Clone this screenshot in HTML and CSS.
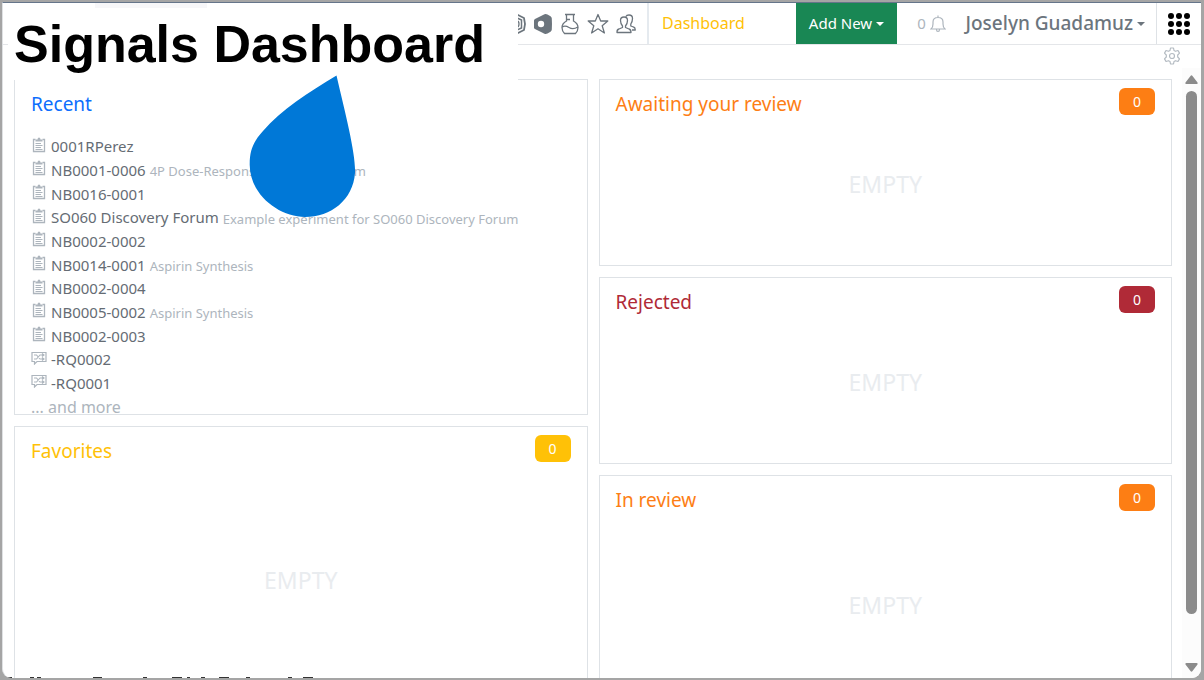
FILE: index.html
```html
<!DOCTYPE html>
<html lang="en">
<head>
<meta charset="utf-8">
<title>Signals Dashboard</title>
<link rel="stylesheet" href="styles.css">
</head>
<body>
<svg class="sprite" aria-hidden="true">
  <symbol id="note" viewBox="0 0 14 16">
    <path d="M3.500 2.500H1.500V14.500H12.500V2.500H10.500" fill="none" stroke="currentColor" stroke-width="1.300"/>
    <path d="M3.500 4.500V2.500H5.500L6 .800H8L8.500 2.500H10.500V4.500Z" fill="currentColor"/>
    <path d="M3.500 6.500H9M3.500 8.500H10.500M3.500 10.500H9M3.500 12.500H10.500" stroke="currentColor"/>
  </symbol>
  <symbol id="request" viewBox="0 0 16 14">
    <path d="M1 1.500H15V10.500H6L3.500 13V10.500H1Z" fill="none" stroke="currentColor" stroke-width="1.200"/>
    <path d="M3 4H5.500L9 8H12.500M3 8H5.500L9 4H12.500M11 2.500 13 4 11 5.500M11 6.500 13 8 11 9.500" fill="none" stroke="currentColor" stroke-width="1.100"/>
  </symbol>
</svg>
<div class="window">
  <header class="topbar">
    <span class="tab"></span>
    <nav class="tools" aria-label="Shortcuts">
      <button class="tool" aria-label="ChemDraw"><svg width="20" height="22" viewBox="0 0 20 22"><path d="M10 1 18 5 19 11 18 17 10 21 2 17V5Z" fill="none" stroke="currentColor" stroke-width="1.800"/><path d="M10 4.500 15.500 7V15L10 17.500 4.500 15V7Z" fill="none" stroke="currentColor" stroke-width="1.500"/><path d="M9.500 8V14H11Q13 14 13 11T11 8Z" fill="none" stroke="currentColor" stroke-width="1.300"/></svg></button>
      <button class="tool" aria-label="Spotfire"><svg width="20" height="22" viewBox="0 0 20 22"><path d="M1 7.500Q1 6.500 2 6L11.500 1.200Q13 .700 14.500 1.500L17.500 3.200Q18.700 4 18.800 5.500Q19.200 11 18.800 16.500Q18.700 18 17.500 18.800L14.500 20.500Q13 21.300 11.500 20.800L2 16Q1 15.500 1 14.500Z" fill="currentColor"/><circle cx="8" cy="11" r="3.200" fill="#fff"/></svg></button>
      <button class="tool" aria-label="Experiments"><svg width="20" height="22" viewBox="0 0 20 22" fill="none" stroke="currentColor" stroke-width="1.300"><path d="M5 1.500H15M6.500 1.500V8Q2 10.500 2 14.500Q2 18 4.500 20.500H15.500Q18 18 18 14.500Q18 10.500 13.500 8V1.500M2.300 14Q5 12 9 14.500T17.800 14M6.500 6.500H10"/></svg></button>
      <button class="tool" aria-label="Favorites"><svg width="22" height="22" viewBox="0 0 22 22" fill="none" stroke="currentColor" stroke-width="1.300" stroke-linejoin="round"><path d="M11 1.500 13.700 8H20.800L15.200 12.700 17.400 20 11 15.800 4.600 20 6.800 12.700 1.200 8H8.300Z"/></svg></button>
      <button class="tool" aria-label="Groups"><svg width="20" height="20" viewBox="0 0 20 20" fill="none" stroke="currentColor" stroke-width="1.300" stroke-linejoin="round"><path d="M1 18.500Q.800 15.500 3 15L6.500 13.500V12Q4.500 9.500 4.500 6.500Q4.500 3 8 3T11.500 6.500Q11.500 9.500 9.500 12V13.500L13 15Q15 15.500 15 18.500ZM10 2.500Q10.500 1 13 1Q16.500 1 16.500 4.500Q16.500 7.500 14.800 10V12L17.500 13Q19.300 13.500 19.300 16H16"/></svg></button>
    </nav>
    <div class="crumb"><a href="#dashboard">Dashboard</a></div>
    <button class="add">Add New<span class="caret"></span></button>
    <button class="alerts" aria-label="0 notifications">0 <svg width="16" height="18" viewBox="0 0 16 18" fill="none" stroke="currentColor" stroke-width="1.200"><path d="M1 14Q3 12.500 3 9V7Q3 2.500 8 2.500T13 7V9Q13 12.500 15 14ZM8 .500V2.500M6.500 14.500Q6.500 16.500 8 16.500T9.500 14.500"/></svg></button>
    <button class="user">Joselyn Guadamuz<span class="caret"></span></button>
    <button class="apps" aria-label="Applications"><svg width="22" height="22" viewBox="0 0 22 22"><circle cx="3" cy="3" r="3"/><circle cx="11" cy="3" r="3"/><circle cx="19" cy="3" r="3"/><circle cx="3" cy="11" r="3"/><circle cx="11" cy="11" r="3"/><circle cx="19" cy="11" r="3"/><circle cx="3" cy="19" r="3"/><circle cx="11" cy="19" r="3"/><circle cx="19" cy="19" r="3"/></svg></button>
  </header>
  <div class="settings">
    <button class="gear" aria-label="Settings"><svg width="16" height="18" viewBox="0 0 16 18" fill="none" stroke="currentColor" stroke-width="1.200" stroke-linejoin="round"><path d="M6.500 1H9.500L10 3.500 11.500 4.300 14 3.500 15.500 6.200 13.700 8V10L15.500 11.800 14 14.500 11.500 13.700 10 14.500 9.500 17H6.500L6 14.500 4.500 13.700 2 14.500 .500 11.800 2.300 10V8L.500 6.200 2 3.500 4.500 4.300 6 3.500Z"/><circle cx="8" cy="9" r="2.500"/></svg></button>
  </div>
  <div class="viewport">
    <main class="board">
      <div class="column">
        <section class="card recent">
          <div class="head"><h2 class="blue">Recent</h2></div>
          <ul class="list">
            <li><svg class="note"><use href="#note"/></svg><a href="#1">0001RPerez</a></li>
            <li><svg class="note"><use href="#note"/></svg><a href="#2">NB0001-0006</a><small>4P Dose-Response Curve Algorithm</small></li>
            <li><svg class="note"><use href="#note"/></svg><a href="#3">NB0016-0001</a></li>
            <li><svg class="note"><use href="#note"/></svg><a href="#4">SO060 Discovery Forum</a><small>Example experiment for SO060 Discovery Forum</small></li>
            <li><svg class="note"><use href="#note"/></svg><a href="#5">NB0002-0002</a></li>
            <li><svg class="note"><use href="#note"/></svg><a href="#6">NB0014-0001</a><small>Aspirin Synthesis</small></li>
            <li><svg class="note"><use href="#note"/></svg><a href="#7">NB0002-0004</a></li>
            <li><svg class="note"><use href="#note"/></svg><a href="#8">NB0005-0002</a><small>Aspirin Synthesis</small></li>
            <li><svg class="note"><use href="#note"/></svg><a href="#9">NB0002-0003</a></li>
            <li><svg class="request"><use href="#request"/></svg><a href="#10">-RQ0002</a></li>
            <li><svg class="request"><use href="#request"/></svg><a href="#11">-RQ0001</a></li>
            <li><a class="more" href="#more">... and more</a></li>
          </ul>
        </section>
        <section class="card favorites">
          <div class="head"><h2 class="yellow">Favorites</h2><span class="badge bg-yellow">0</span></div>
          <p class="empty">EMPTY</p>
        </section>
      </div>
      <div class="column">
        <section class="card short">
          <div class="head"><h2 class="orange">Awaiting your review</h2><span class="badge bg-orange">0</span></div>
          <p class="empty">EMPTY</p>
        </section>
        <section class="card short">
          <div class="head"><h2 class="red">Rejected</h2><span class="badge bg-red">0</span></div>
          <p class="empty">EMPTY</p>
        </section>
        <section class="card tall">
          <div class="head"><h2 class="orange">In review</h2><span class="badge bg-orange">0</span></div>
          <p class="empty">EMPTY</p>
        </section>
      </div>
    </main>
    <div class="scrollbar" aria-hidden="true">
      <svg width="13" height="9" viewBox="0 0 13 9"><path d="M5.500 1Q6.500-.500 7.500 1L12.500 7.500Q13 9 11.500 9H1.500Q0 9 .500 7.500Z" fill="#8b8b8b"/></svg>
      <span class="thumb"></span>
      <svg width="13" height="9" viewBox="0 0 13 9"><path d="M5.500 8Q6.500 9.500 7.500 8L12.500 1.500Q13 0 11.500 0H1.500Q0 0 .500 1.500Z" fill="#8b8b8b"/></svg>
    </div>
  </div>
  <h1 class="title">Signals Dashboard</h1>
  <svg class="drop" width="108" height="144" viewBox="0 0 108 144" aria-hidden="true"><path d="M87.500 .500C97 41 107 80 106 98C104 125 82 142 56 142C30 142 1 120 .700 90C.500 76 4 67 14 56C32 35 60 17 87.500 .500Z" fill="#0078d7"/></svg>
  <svg class="edge" width="320" height="1" viewBox="0 0 320 1" aria-hidden="true"><path d="M1 .500H9M27 .500h4m3 0h4m52 0h9m41 0h4m25 0h10m5 0h3m11 0h4m14 0h10m17 0h4m38 0h4m11 0h10" stroke="#333"/></svg>
</div>
</body>
</html>
```
FILE: styles.css
```css
* { box-sizing: border-box; }

body {
  margin: 0;
  background: #a5a5a5;
  color: #656c74;
  font: 15px/23px "Noto Sans", "Open Sans", sans-serif;
}

h1, h2, p, ul { margin: 0; padding: 0; font-weight: 400; }

button {
  margin: 0;
  padding: 0;
  border: 0;
  background: none;
  color: inherit;
  font: inherit;
  white-space: nowrap;
  cursor: pointer;
}

a { color: inherit; text-decoration: none; }
svg { display: block; flex: none; }
.sprite { position: absolute; width: 0; height: 0; }

.window {
  position: relative;
  display: flex;
  flex-direction: column;
  height: calc(100vh - 4px);
  margin: 2px 3px 2px 2px;
  overflow: hidden;
  border-top: 1px solid #65758a;
  border-left: 1px solid #dfe1e3;
  border-radius: 0 0 9px 9px;
  background: #fff;
}

.topbar {
  display: flex;
  flex: none;
  height: 42px;
  border-bottom: 1px solid #e4e6e9;
}

.tab { width: 112px; margin-left: 92px; background: #f7f7f9; }

.tools {
  display: flex;
  align-items: center;
  gap: 7px;
  margin-left: auto;
  padding-right: 11px;
  color: #6c757d;
}

.crumb {
  display: flex;
  align-items: center;
  width: 149px;
  padding-left: 13px;
  border-left: 2px solid #e5eaef;
  color: #ffc107;
  font-size: 16px;
}

.add, .user, .alerts { display: flex; align-items: center; justify-content: center; }
.add { width: 101px; background: #198754; color: #fff; }

.caret {
  margin-left: 4px;
  border: 4px solid transparent;
  border-top-color: currentColor;
  border-bottom: 0;
}

.alerts { width: 69px; gap: 4px; color: #adb5bd; }
.user { width: 190px; padding-right: 11px; justify-content: flex-end; color: #6c757d; font-size: 19px; font-weight: 500; }

.apps {
  display: grid;
  place-items: center;
  width: 45px;
  border-left: 1px solid #dee2e6;
}

.settings {
  display: flex;
  flex: none;
  align-items: flex-start;
  justify-content: flex-end;
  height: 23px;
  padding: 2px 21px 0 0;
  color: #b4bbc2;
}

.viewport { display: flex; flex: 1; min-height: 0; }

.board {
  display: grid;
  flex: 1;
  grid-template-columns: 1fr 1fr;
  gap: 11px;
  padding: 11px 10px 0 11px;
  overflow: hidden;
}

.column { display: flex; flex-direction: column; gap: 11px; }

.card {
  display: flex;
  flex: none;
  flex-direction: column;
  border: 1px solid #dee2e6;
}

.recent { height: 336px; }
.short { height: 187px; }
.tall { height: 237px; }
.favorites { height: 286px; }

.head {
  display: flex;
  flex: none;
  justify-content: space-between;
  height: 23px;
  padding: 8px 16px 0;
}

.head h2 { padding-top: 2px; font-size: 19px; line-height: 28px; white-space: nowrap; }

.badge {
  flex: none;
  width: 36px;
  height: 27px;
  border-radius: 6px;
  color: #fff;
  font-size: 14px;
  line-height: 28px;
  text-align: center;
}

.blue { color: #0d6efd; }
.yellow { color: #ffc107; }
.orange { color: #fd7e14; }
.red { color: #b02a37; }
.bg-yellow { background: #ffc107; }
.bg-orange { background: #fd7e14; }
.bg-red { background: #b02a37; }

.empty {
  display: grid;
  flex: 1;
  place-items: center;
  color: #e9ecef;
  font-size: 23px;
}

.list {
  display: grid;
  flex: none;
  grid-auto-rows: 1fr;
  height: 284px;
  margin-top: 32px;
  padding: 0 16px;
  list-style: none;
}

.list li { display: flex; align-items: center; white-space: nowrap; }
.list small { margin-left: 4px; color: #adb5bd; font-size: 13px; line-height: 21px; align-self: flex-end; }
.list .more { color: #adb5bd; font-size: 16px; }
.note, .request { margin-bottom: 4px; color: #adb5bd; }
.note { width: 14px; height: 16px; margin-left: 1px; margin-right: 5px; }
.request { width: 16px; height: 14px; margin-right: 4px; }

.scrollbar {
  display: flex;
  flex: none;
  flex-direction: column;
  align-items: center;
  width: 19px;
  padding: 7px 0 6px;
  background: #fcfcfc;
}

.thumb { width: 11px; height: 523px; margin: 7px 0 auto; border-radius: 6px; background: #8b8b8b; }

.title {
  position: absolute;
  top: 5px;
  left: 5px;
  width: 510px;
  height: 72px;
  padding-left: 6px;
  background: #fff;
  color: #000;
  font: bold 52px/72px "Liberation Sans", Arial, sans-serif;
  white-space: nowrap;
}

.drop { position: absolute; top: 72px; left: 246px; }
.edge { position: absolute; bottom: 0; left: 0; }
```
